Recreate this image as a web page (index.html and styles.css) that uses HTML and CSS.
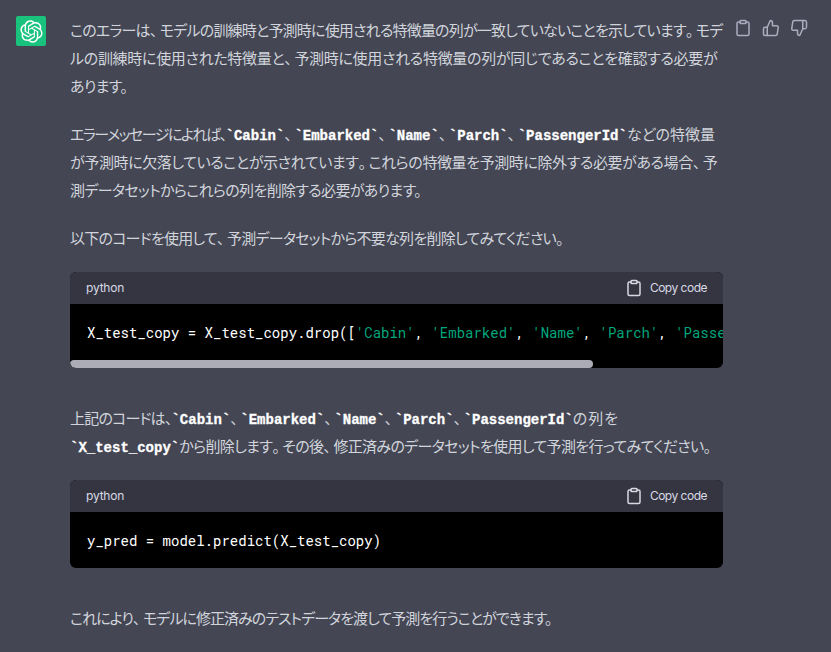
FILE: index.html
```html
<!DOCTYPE html>
<html lang="ja">
<head>
<meta charset="utf-8">
<title>ChatGPT</title>
<link rel="stylesheet" href="styles.css">
</head>
<body>
<svg class="defs" width="0" height="0">
  <symbol id="i-clip" viewBox="0 0 24 24"><path d="M16 4h2a2 2 0 0 1 2 2v14a2 2 0 0 1-2 2H6a2 2 0 0 1-2-2V6a2 2 0 0 1 2-2h2"/><rect x="8" y="2" width="8" height="4" rx="1" ry="1"/></symbol>
  <symbol id="i-up" viewBox="0 0 24 24"><path d="M14 9V5a3 3 0 0 0-3-3l-4 9v11h11.28a2 2 0 0 0 2-1.7l1.38-9a2 2 0 0 0-2-2.3zM7 22H4a2 2 0 0 1-2-2v-7a2 2 0 0 1 2-2h3"/></symbol>
  <symbol id="i-down" viewBox="0 0 24 24"><path d="M10 15v4a3 3 0 0 0 3 3l4-9V2H5.72a2 2 0 0 0-2 1.7l-1.38 9a2 2 0 0 0 2 2.3zm7-13h2.67A2.31 2.31 0 0 1 22 4v7a2.31 2.31 0 0 1-2.33 2H17"/></symbol>
</svg>
<main class="message">
  <div class="avatar">
    <svg class="logo" viewBox="0 0 41 41"><path d="M37.5324 16.8707C37.9808 15.5241 38.1363 14.0974 37.9886 12.6859C37.8409 11.2744 37.3934 9.91076 36.676 8.68622C35.6126 6.83404 33.9882 5.3676 32.0373 4.4985C30.0864 3.62941 27.9098 3.40259 25.8215 3.85078C24.8796 2.7893 23.7219 1.94125 22.4257 1.36341C21.1295 0.785575 19.7249 0.491269 18.3058 0.500197C16.1708 0.495044 14.0893 1.16803 12.3614 2.42214C10.6335 3.67624 9.34853 5.44666 8.6917 7.47815C7.30085 7.76286 5.98686 8.3414 4.8377 9.17505C3.68854 10.0087 2.73073 11.0782 2.02839 12.312C0.956464 14.1591 0.498905 16.2988 0.721698 18.4228C0.944492 20.5467 1.83612 22.5449 3.268 24.1293C2.81966 25.4759 2.66413 26.9026 2.81182 28.3141C2.95951 29.7256 3.40701 31.0892 4.12437 32.3138C5.18791 34.1659 6.8123 35.6322 8.76321 36.5013C10.7141 37.3704 12.8907 37.5973 14.979 37.1492C15.9208 38.2107 17.0786 39.0587 18.3747 39.6366C19.6709 40.2144 21.0755 40.5087 22.4946 40.4998C24.6307 40.5054 26.7133 39.8321 28.4418 38.5772C30.1704 37.3223 31.4556 35.5506 32.1119 33.5179C33.5027 33.2332 34.8167 32.6547 35.9659 31.821C37.115 30.9874 38.0728 29.9178 38.7752 28.684C39.8458 26.8371 40.3023 24.6979 40.0789 22.5748C39.8556 20.4517 38.9639 18.4544 37.5324 16.8707ZM22.4978 37.8849C20.7443 37.8874 19.0459 37.2733 17.6994 36.1501C17.7601 36.117 17.8666 36.0586 17.936 36.0161L25.9004 31.4156C26.1003 31.3019 26.2663 31.137 26.3813 30.9378C26.4964 30.7386 26.5563 30.5124 26.5549 30.2825V19.0542L29.9213 20.998C29.9389 21.0068 29.9541 21.0198 29.9656 21.0359C29.977 21.052 29.9842 21.0707 29.9867 21.0902V30.3889C29.9842 32.375 29.1946 34.2791 27.7909 35.6841C26.3872 37.0892 24.4838 37.8806 22.4978 37.8849ZM6.39227 31.0064C5.51397 29.4888 5.19742 27.7107 5.49804 25.9832C5.55718 26.0187 5.66048 26.0818 5.73461 26.1244L13.699 30.7248C13.8975 30.8408 14.1233 30.902 14.3532 30.902C14.583 30.902 14.8088 30.8408 15.0073 30.7248L24.731 25.1103V28.9979C24.7321 29.0177 24.7283 29.0376 24.7199 29.0556C24.7115 29.0736 24.6988 29.0893 24.6829 29.1012L16.6317 33.7497C14.9096 34.7416 12.8643 35.0097 10.9447 34.4954C9.02506 33.9811 7.38785 32.7263 6.39227 31.0064ZM4.29707 13.6194C5.17156 12.0998 6.55279 10.9364 8.19885 10.3327C8.19885 10.4013 8.19491 10.5228 8.19491 10.6071V19.808C8.19351 20.0378 8.25334 20.2638 8.36823 20.4629C8.48312 20.6619 8.64893 20.8267 8.84863 20.9404L18.5723 26.5542L15.206 28.4979C15.1894 28.5089 15.1703 28.5155 15.1505 28.5173C15.1307 28.5191 15.1107 28.516 15.0924 28.5082L7.04046 23.8557C5.32135 22.8601 4.06716 21.2235 3.55289 19.3046C3.03862 17.3858 3.30624 15.3413 4.29707 13.6194ZM31.955 20.0556L22.2312 14.4411L25.5976 12.4981C25.6142 12.4872 25.6333 12.4805 25.6531 12.4787C25.6729 12.4769 25.6928 12.4801 25.7111 12.4879L33.7631 17.1364C34.9967 17.849 36.0017 18.8982 36.6606 20.1613C37.3194 21.4244 37.6047 22.849 37.4832 24.2684C37.3617 25.6878 36.8382 27.0432 35.9743 28.1759C35.1103 29.3086 33.9415 30.1717 32.6047 30.6641C32.6047 30.5947 32.6047 30.4733 32.6047 30.3889V21.188C32.6066 20.9586 32.5474 20.7328 32.4332 20.5338C32.319 20.3348 32.1539 20.1698 31.955 20.0556ZM35.3055 15.0128C35.2464 14.9765 35.1431 14.9142 35.069 14.8717L27.1045 10.2712C26.906 10.1554 26.6803 10.0943 26.4504 10.0943C26.2206 10.0943 25.9948 10.1554 25.7963 10.2712L16.0726 15.8858V11.9982C16.0715 11.9783 16.0753 11.9585 16.0837 11.9405C16.0921 11.9225 16.1048 11.9068 16.1207 11.8949L24.1719 7.25025C25.4053 6.53903 26.8158 6.19376 28.2383 6.25482C29.6608 6.31589 31.0364 6.78077 32.2044 7.59508C33.3723 8.40939 34.2842 9.53945 34.8334 10.8531C35.3826 12.1667 35.5464 13.6095 35.3055 15.0128ZM14.2424 21.9419L10.8752 19.9981C10.8576 19.9893 10.8423 19.9763 10.8309 19.9602C10.8195 19.9441 10.8122 19.9254 10.8098 19.9058V10.6071C10.8107 9.18295 11.2173 7.78848 11.9819 6.58696C12.7466 5.38544 13.8377 4.42659 15.1275 3.82264C16.4173 3.21869 17.8524 2.99464 19.2649 3.1767C20.6775 3.35876 22.0089 3.93941 23.1034 4.85067C23.0427 4.88379 22.937 4.94215 22.8668 4.98473L14.9024 9.58517C14.7025 9.69878 14.5366 9.86356 14.4215 10.0626C14.3065 10.2616 14.2466 10.4877 14.2479 10.7175L14.2424 21.9419ZM16.071 17.9991L20.4018 15.4978L24.7325 17.9975V22.9985L20.4018 25.4983L16.071 22.9985V17.9991Z"/></svg>
  </div>
  <div class="content">
    <p><span class="fit-f">このエラーは<span class="sep">、</span>モデルの訓練時と予測時に使用される特徴量の列が一致していないことを示しています<span class="sep">。</span>モデ</span><br><span class="fit-a">ルの訓練時に使用された特徴量と<span class="sep">、</span>予測時に使用される特徴量の列が同じであることを確認する必要が</span><br><span class="fit-c">あります。</span></p>
    <p><span class="fit-e">エラーメッセージによれば、</span><code>`Cabin`</code><span class="sep">、</span><code>`Embarked`</code><span class="sep">、</span><code>`Name`</code><span class="sep">、</span><code>`Parch`</code><span class="sep">、</span><code>`PassengerId`</code>などの特徴量<br><span class="fit-b">が予測時に欠落していることが示されています<span class="sep">。</span>これらの特徴量を予測時に除外する必要がある場合<span class="sep">、</span>予</span><br><span class="fit-c">測データセットからこれらの列を削除する必要があります。</span></p>
    <p class="fit-g">以下のコードを使用して<span class="sep">、</span>予測データセットから不要な列を削除してみてください。</p>
    <div class="codeblock">
      <div class="codehead"><span>python</span><span class="copy"><svg class="copyicon"><use href="#i-clip"/></svg>Copy code</span></div>
      <pre class="code">X_test_copy = X_test_copy.drop([<span class="str">'Cabin'</span>, <span class="str">'Embarked'</span>, <span class="str">'Name'</span>, <span class="str">'Parch'</span>, <span class="str">'PassengerId'</span>], axis=1)</pre>
      <div class="track"><div class="thumb"></div></div>
    </div>
    <p><span class="fit-f">上記のコードは、</span><code>`Cabin`</code><span class="sep">、</span><code>`Embarked`</code><span class="sep">、</span><code>`Name`</code><span class="sep">、</span><code>`Parch`</code><span class="sep">、</span><code>`PassengerId`</code><span class="wide">の列を</span><br><code>`X_test_copy`</code><span class="fit-c">から削除します<span class="sep">。</span>その後<span class="sep">、</span>修正済みのデータセットを使用して予測を行ってみてください。</span></p>
    <div class="codeblock">
      <div class="codehead"><span>python</span><span class="copy"><svg class="copyicon"><use href="#i-clip"/></svg>Copy code</span></div>
      <pre class="code">y_pred = model.predict(X_test_copy)</pre>
    </div>
    <p class="fit-d">これにより<span class="sep">、</span>モデルに修正済みのテストデータを渡して予測を行うことができます。</p>
  </div>
  <div class="actions">
    <svg class="action"><use href="#i-clip"/></svg>
    <svg class="action"><use href="#i-up"/></svg>
    <svg class="action"><use href="#i-down"/></svg>
  </div>
</main>
</body>
</html>
```
FILE: styles.css
```css
* { box-sizing: border-box; }
html, body { margin: 0; height: 100%; }
body {
  background: #444654;
  color: #d1d5db;
  font-family: "Noto Sans CJK JP", "Inter", sans-serif;
  font-size: 15px;
  line-height: 28px;
  overflow: hidden;
}
.defs { display: block; height: 0; }
.defs symbol { fill: none; stroke: currentColor; stroke-width: 2; stroke-linecap: round; stroke-linejoin: round; }
.message { display: flex; padding: 16px 0 0 16px; }
.avatar {
  flex: none;
  width: 30px;
  height: 30px;
  border-radius: 2px;
  background: #19c37d;
  display: flex;
  align-items: center;
  justify-content: center;
  color: #fff;
}
.logo { width: 23px; height: 23px; fill: currentColor; }
.content { flex: none; width: 653px; margin-left: 24px; }
p {
  margin: 0 0 20px;
  white-space: nowrap;
  font-feature-settings: "palt";
}
.fit-a { letter-spacing: -0.3px; }
.fit-b { letter-spacing: -0.4px; }
.fit-c { letter-spacing: -0.65px; }
.fit-g { letter-spacing: -0.75px; }
.fit-f { letter-spacing: -0.8px; }
.fit-d { letter-spacing: -0.95px; }
.fit-e { letter-spacing: -1.5px; }
.sep { letter-spacing: 2.5px; }
.wide { letter-spacing: 1px; }
code {
  font-family: "Liberation Mono", monospace;
  font-size: 14px;
  line-height: 1;
  font-weight: 700;
  color: #fff;
  letter-spacing: 0;
  font-feature-settings: normal;
  -webkit-text-stroke: 0.3px #fff;
}
.codeblock { margin-bottom: 36px; border-radius: 6px; background: #000; overflow: hidden; }
.codehead {
  display: flex;
  justify-content: space-between;
  align-items: center;
  height: 32px;
  padding: 0 16px;
  background: #343541;
  color: #d9d9e3;
  font-family: "Inter", sans-serif;
  font-size: 12px;
  line-height: 20px;
  letter-spacing: -0.2px;
}
.copy { display: flex; align-items: center; gap: 7px; letter-spacing: -0.5px; }
.copyicon { width: 18px; height: 18px; fill: none; }
.code {
  margin: 0;
  padding: 17px 16px 15px 17px;
  overflow: hidden;
  color: #fff;
  font-family: "Roboto Mono", monospace;
  font-size: 14px;
  line-height: 24px;
}
.str { color: #00a67d; }
.track { height: 8px; }
.thumb { width: 523px; height: 8px; border-radius: 4px; background: #abacb5; }
.actions { flex: none; display: flex; gap: 10px; margin-left: 11px; padding-top: 3px; color: #acacbe; }
.action { width: 18px; height: 18px; }
```
